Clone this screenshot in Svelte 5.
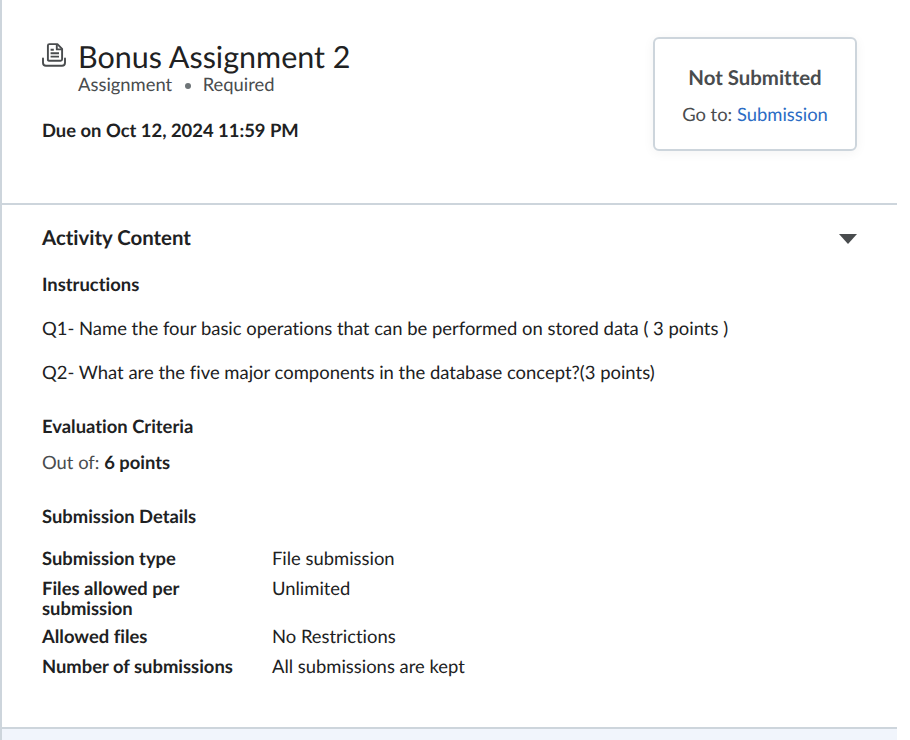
<script>
  const details = [
    ['Submission type', 'File submission'],
    ['Files allowed per submission', 'Unlimited'],
    ['Allowed files', 'No Restrictions'],
    ['Number of submissions', 'All submissions are kept']
  ];
</script>

<div class="page">
  <main class="panel">
    <header class="head">
      <div class="intro">
        <div class="title-row">
          <svg class="doc-icon" viewBox="0 0 24 24" width="24" height="24" fill="none" stroke="#494c4e" stroke-width="1.9" aria-hidden="true">
            <path d="M5.9 17.6V2.6a1.5 1.5 0 0 1 1.5-1.5h8l4.7 4.7v10.4a1.5 1.5 0 0 1-1.5 1.5H7.4a1.5 1.5 0 0 1-1.5-.6" stroke-linejoin="round" />
            <path d="M14.8 1.4v5h5" stroke-linejoin="round" />
            <path d="M8.6 6.8h3.2M8.6 10.2h8.4M8.6 13.6h8.4" />
            <path d="M1 15.5v4.3a3 3 0 0 0 3 3h16a3 3 0 0 0 3-3v-4.3" stroke-linecap="round" />
          </svg>
          <h1>Bonus Assignment 2</h1>
        </div>
        <div class="meta">Assignment<span class="dot"></span>Required</div>
        <div class="due">Due on Oct 12, 2024 11:59 PM</div>
      </div>
      <aside class="status">
        <div class="status-title">Not Submitted</div>
        <div class="status-link">Go to: <a href="#submission">Submission</a></div>
      </aside>
    </header>

    <section class="content">
      <div class="content-head">
        <h2>Activity Content</h2>
        <span class="caret"></span>
      </div>
      <h3 class="instructions">Instructions</h3>
      <p class="q1">Q1- Name the four basic operations that can be performed on stored data ( 3 points )</p>
      <p class="q2">Q2- What are the five major components in the database concept?(3 points)</p>
      <h3 class="criteria">Evaluation Criteria</h3>
      <p class="score">Out of: <b>6 points</b></p>
      <h3 class="details-title">Submission Details</h3>
      <dl class="details">
        {#each details as [label, value]}
          <dt>{label}</dt>
          <dd>{value}</dd>
        {/each}
      </dl>
    </section>
  </main>
  <div class="footer"></div>
</div>

<style>
  :global(body) {
    margin: 0;
    background: #fff;
  }
  .page {
    width: 897px;
    height: 740px;
    display: flex;
    flex-direction: column;
    box-sizing: border-box;
    border-left: 2px solid #cdd5dc;
    font-family: Lato, "Open Sans", sans-serif;
    font-variant-ligatures: none;
    text-rendering: geometricPrecision;
    color: #202122;
    overflow: hidden;
  }
  .panel {
    flex: 0 0 auto;
    height: 729px;
    box-sizing: border-box;
    border-bottom: 2px solid #cdd5dc;
  }
  .head {
    height: 205px;
    box-sizing: border-box;
    border-bottom: 2px solid #cdd5dc;
    padding: 37px 40px 0 40px;
    display: flex;
    justify-content: space-between;
    align-items: flex-start;
  }
  .intro {
    margin-top: 1px;
  }
  .title-row {
    display: flex;
    align-items: center;
    gap: 12px;
    height: 38px;
  }
  .doc-icon {
    flex: none;
    margin-top: -5px;
  }
  h1 {
    margin: 0;
    font-size: 30.5px;
    font-weight: 400;
    line-height: 38px;
  }
  .meta {
    margin: -2px 0 0 36px;
    font-size: 18.4px;
    line-height: 20px;
    color: #494c4e;
    display: flex;
    align-items: center;
  }
  .dot {
    width: 6px;
    height: 6px;
    border-radius: 50%;
    background: #6e7477;
    margin: 3px 11.5px 0 13px;
  }
  .due {
    margin-top: 25px;
    font-size: 18.4px;
    line-height: 22px;
    font-weight: 700;
  }
  .status {
    width: 204px;
    height: 114px;
    box-sizing: border-box;
    border: 2px solid #cdd5dc;
    border-radius: 6px;
    box-shadow: 0 2px 12px rgba(0, 0, 0, 0.05);
    background: #fff;
    text-align: center;
    color: #494c4e;
  }
  .status-title {
    margin-top: 27px;
    font-size: 20.4px;
    line-height: 24px;
    font-weight: 700;
  }
  .status-link {
    margin-top: 13px;
    font-size: 18.4px;
    line-height: 22px;
  }
  a {
    color: #2b6cc4;
    text-decoration: none;
  }
  .content {
    padding: 0 40px;
  }
  .content-head {
    display: flex;
    justify-content: space-between;
    align-items: center;
    padding-top: 19px;
    height: 46px;
    box-sizing: border-box;
  }
  h2 {
    margin: 0;
    font-size: 20.4px;
    line-height: 28px;
    font-weight: 700;
  }
  .caret {
    width: 0;
    height: 0;
    border-left: 9.5px solid transparent;
    border-right: 9.5px solid transparent;
    border-top: 10px solid #494c4e;
    margin-top: 3px;
  }
  h3 {
    margin: 0;
    font-size: 18.4px;
    line-height: 24px;
    font-weight: 700;
  }
  p {
    margin: 0;
    font-size: 18.45px;
    line-height: 24px;
  }
  .instructions { margin-top: 21px; }
  .q1 { margin-top: 20px; }
  .q2 { margin-top: 20px; }
  .criteria { margin-top: 30px; }
  .score {
    margin-top: 12px;
    font-size: 18.4px;
    color: #494c4e;
  }
  .score b { color: #202122; }
  .details-title { margin-top: 30px; }
  .details {
    margin: 20px 0 0;
    display: grid;
    grid-template-columns: 230px 1fr;
    row-gap: 10px;
    font-size: 18.4px;
    line-height: 20px;
  }
  dt {
    font-weight: 700;
    width: 192px;
  }
  dd { margin: 0; }
  dt:nth-of-type(2) { margin-bottom: -2px; }
  dt:nth-of-type(4) { width: auto; }
  .footer {
    flex: 1;
    background: #f1f5fc;
  }
</style>
